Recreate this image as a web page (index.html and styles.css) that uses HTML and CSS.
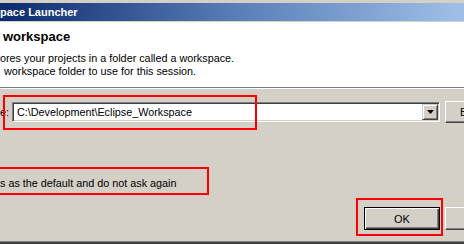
FILE: index.html
```html
<!DOCTYPE html>
<html lang="en">
<head>
  <meta charset="UTF-8" />
  <title>Workspace Launcher</title>
  <link rel="stylesheet" href="styles.css">
</head>
<body>
  <div class="window">
    <div class="titlebar">pace Launcher</div>

    <!-- Banner -->
    <div class="banner">
      <h1>workspace</h1>
      <p class="line1">ores your projects in a folder called a workspace.</p>
      <p class="line2">workspace folder to use for this session.</p>
    </div>

    <div class="content">
      <div class="ws-row">
        <label class="ws-label">e:</label>
        <div class="combo">
          <span class="combo-text">C:\Development\Eclipse_Workspace</span>
          <div class="drop-btn">
            <svg width="7" height="4" viewBox="0 0 7 4"><path d="M0 0h7L3.5 4z" fill="#000"/></svg>
          </div>
        </div>
        <div class="btn browse">Browse...</div>
      </div>

      <div class="check-row">s as the default and do not ask again</div>

      <div class="btn-row">
        <div class="btn default">OK</div>
        <div class="btn">Cancel</div>
      </div>
    </div>

    <!-- red annotation boxes -->
    <div class="mark mark-ws"></div>
    <div class="mark mark-check"></div>
    <div class="mark mark-ok"></div>
  </div>
</body>
</html>
```

FILE: styles.css
```css
* { box-sizing: border-box; }

body {
  margin: 0;
  width: 464px;
  height: 244px;
  overflow: hidden;
  font-family: "Liberation Sans", Arial, sans-serif;
  font-size: 10.8px;
  color: #000;
  background: #d4d0c8;
}

.window {
  position: relative;
  width: 527px;
  height: 244px;
  display: flex;
  flex-direction: column;
  border-bottom: 2px solid #404040;
}

.titlebar {
  height: 21px;
  border-top: 3px solid #d4d0c8;
  background: linear-gradient(to right, #0c2a6c, #5a7eb7 45%, #9ec0e8 88%, #a6caf0);
  color: #fff;
  font-weight: bold;
  font-size: 11px;
  line-height: 18px;
  white-space: nowrap;
}

.banner {
  height: 67px;
  border-top: 1px solid #d4d0c8;
  background: #fff;
  border-bottom: 1px solid #808080;
  padding-top: 7px;
}

.banner h1 {
  margin: 0 0 0 3px;
  font-size: 13px;
  line-height: 16px;
  font-weight: bold;
}

.banner p {
  margin: 0;
  line-height: 13px;
  white-space: nowrap;
}

.banner .line1 { margin-top: 7px; }
.banner .line2 { padding-left: 4px; }

.content {
  flex: 1;
  border-top: 1px solid #fff;
  border-bottom: 1px solid #808080;
}

.ws-row {
  display: flex;
  align-items: center;
  height: 22px;
  margin-top: 12px;
}

.ws-label {
  width: 12px;
  line-height: 16px;
}

.combo {
  width: 428px;
  height: 20px;
  display: flex;
  align-items: center;
  justify-content: space-between;
  background: #fff;
  border: 1px solid;
  border-color: #808080 #fff #fff #808080;
  box-shadow: inset 1px 1px #404040, inset -1px -1px #d4d0c8;
  padding: 1px;
}

.combo-text {
  padding-left: 3px;
  line-height: 16px;
  white-space: nowrap;
}

.drop-btn {
  width: 16px;
  height: 16px;
  display: flex;
  align-items: center;
  justify-content: center;
  background: #d4d0c8;
  border: 1px solid;
  border-color: #d4d0c8 #404040 #404040 #d4d0c8;
  box-shadow: inset 1px 1px #fff, inset -1px -1px #808080;
}

.btn {
  width: 75px;
  height: 23px;
  display: flex;
  align-items: center;
  justify-content: center;
  background: #d4d0c8;
  border: 1px solid;
  border-color: #fff #404040 #404040 #fff;
  box-shadow: inset -1px -1px #808080;
  white-space: nowrap;
}

.browse {
  height: 22px;
  margin-left: 5px;
}

.check-row {
  height: 13px;
  line-height: 13px;
  margin-top: 54px;
  white-space: nowrap;
}

.btn-row {
  display: flex;
  justify-content: flex-end;
  gap: 5px;
  margin-top: 17px;
  padding-right: 7px;
}

.btn.default {
  width: 76px;
  border: 1px solid #000;
  box-shadow: inset 1px 1px #fff, inset -1px -1px #404040, inset -2px -2px #808080;
  font-size: 11px;
}

.mark {
  position: absolute;
  border: 2px solid #ff0000;
}

.mark-ws {
  left: 3px;
  top: 95px;
  width: 254px;
  height: 35px;
}

.mark-check {
  left: -20px;
  top: 167px;
  width: 229px;
  height: 28px;
}

.mark-ok {
  left: 356px;
  top: 198px;
  width: 87px;
  height: 38px;
}
```
